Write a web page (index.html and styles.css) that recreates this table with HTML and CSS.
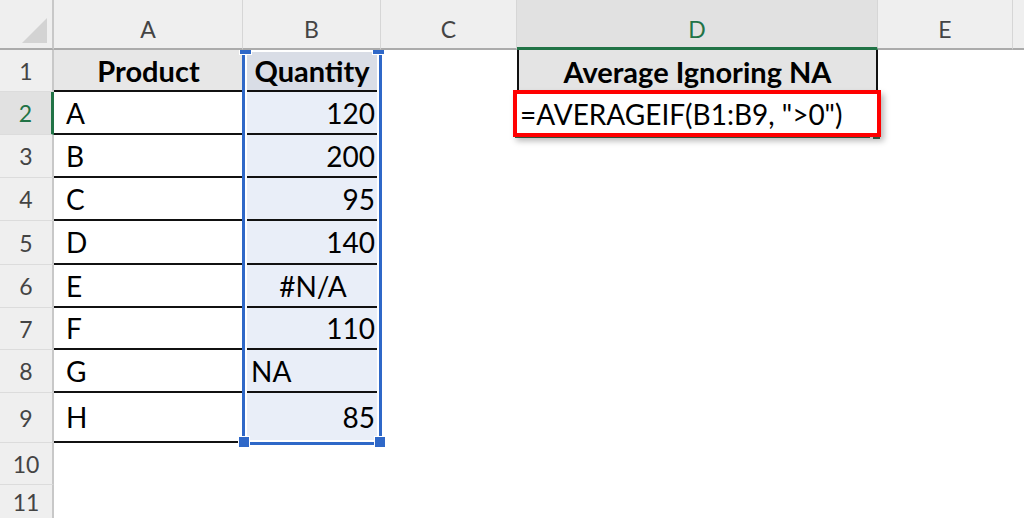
FILE: index.html
```html
<!DOCTYPE html>
<html lang="en">
<head>
<meta charset="utf-8">
<title>AVERAGEIF ignoring NA</title>
<link rel="stylesheet" href="styles.css">
</head>
<body>
<div class="sheet">
  <!-- column headers -->
  <div class="corner"><span class="tri"></span></div>
  <div class="ch">A</div>
  <div class="ch">B</div>
  <div class="ch">C</div>
  <div class="ch ch-active">D</div>
  <div class="ch">E</div>
  <div class="ch ch-last"></div>

  <!-- row 1 -->
  <div class="rh">1</div>
  <div class="c a hdr">Product</div>
  <div class="c b hdr bhdr">Quantity</div>
  <div class="c"></div>
  <div class="c d1 hdr">Average Ignoring NA</div>
  <div class="c"></div>
  <div class="c"></div>

  <!-- row 2 -->
  <div class="rh rh-active">2</div>
  <div class="c a">A</div>
  <div class="c b num">120</div>
  <div class="c"></div>
  <div class="c d2"><div class="editbox">=AVERAGEIF(B1:B9, "&gt;0")</div><span class="actline"></span><span class="fillh"></span></div>
  <div class="c"></div>
  <div class="c"></div>

  <!-- row 3 -->
  <div class="rh">3</div>
  <div class="c a">B</div>
  <div class="c b num">200</div>
  <div class="c"></div><div class="c"></div><div class="c"></div><div class="c"></div>

  <!-- row 4 -->
  <div class="rh">4</div>
  <div class="c a">C</div>
  <div class="c b num">95</div>
  <div class="c"></div><div class="c"></div><div class="c"></div><div class="c"></div>

  <!-- row 5 -->
  <div class="rh">5</div>
  <div class="c a">D</div>
  <div class="c b num">140</div>
  <div class="c"></div><div class="c"></div><div class="c"></div><div class="c"></div>

  <!-- row 6 -->
  <div class="rh">6</div>
  <div class="c a">E</div>
  <div class="c b err">#N/A</div>
  <div class="c"></div><div class="c"></div><div class="c"></div><div class="c"></div>

  <!-- row 7 -->
  <div class="rh">7</div>
  <div class="c a">F</div>
  <div class="c b num">110</div>
  <div class="c"></div><div class="c"></div><div class="c"></div><div class="c"></div>

  <!-- row 8 -->
  <div class="rh">8</div>
  <div class="c a">G</div>
  <div class="c b">NA</div>
  <div class="c"></div><div class="c"></div><div class="c"></div><div class="c"></div>

  <!-- row 9 -->
  <div class="rh">9</div>
  <div class="c a">H</div>
  <div class="c b num">85</div>
  <div class="c"></div><div class="c"></div><div class="c"></div><div class="c"></div>

  <!-- row 10 -->
  <div class="rh">10</div>
  <div class="c"></div><div class="c"></div><div class="c"></div><div class="c"></div><div class="c"></div><div class="c"></div>

  <!-- row 11 -->
  <div class="rh rh-last">11</div>
  <div class="c"></div><div class="c"></div><div class="c"></div><div class="c"></div><div class="c"></div><div class="c"></div>

  <!-- reference range highlight B1:B9 (overlay) -->
  <div class="sel">
    <span class="h h-tl"></span>
    <span class="h h-tr"></span>
    <span class="h h-bl"></span>
    <span class="h h-br"></span>
  </div>
</div>
</body>
</html>
```

FILE: styles.css
```css
* { box-sizing: border-box; }

html, body {
  margin: 0;
  padding: 0;
  background: #ffffff;
}

body {
  width: 1024px;
  height: 518px;
  overflow: hidden;
  font-family: "Lato", "Liberation Sans", sans-serif;
  color: #000;
}

.sheet {
  display: grid;
  grid-template-columns: 54px 189px 138px 136px 361px 135px 11px;
  grid-template-rows: 50px 42px 43px 43px 43px 44px 43px 42px 43px 50px 42px 33px;
  width: 1024px;
  height: 518px;
  position: relative;
}

/* ---------- headers ---------- */
.corner {
  background: #efefef;
  border-right: 2px solid #c8c8c8;
  border-bottom: 2px solid #ababab;
  position: relative;
}
.tri {
  position: absolute;
  left: 22px;
  top: 18px;
  width: 0;
  height: 0;
  border-style: solid;
  border-width: 0 0 25px 25px;
  border-color: transparent transparent #d3d3d3 transparent;
}

.ch {
  background: #efefef;
  border-bottom: 2px solid #ababab;
  border-right: 1px solid #d6d6d6;
  display: flex;
  align-items: center;
  justify-content: center;
  padding-top: 10px;
  font-size: 23px;
  color: #444;
}
.ch-active {
  background: #e1e1e1;
  border-bottom: 3px solid #217346;
  color: #217346;
}
.ch-last { border-right: 0; }

.rh {
  background: #efefef;
  border-right: 2px solid #c8c8c8;
  border-bottom: 1px solid #dcdcdc;
  display: flex;
  align-items: center;
  justify-content: center;
  font-size: 23px;
  color: #444;
}
.rh-active {
  background: #e1e1e1;
  color: #217346;
  border-right: 3px solid #217346;
}
.rh-last { border-bottom: 0; }

/* ---------- cells ---------- */
.c {
  display: flex;
  align-items: center;
  font-size: 28px;
  white-space: nowrap;
  min-width: 0;
}

.a {
  border-bottom: 2px solid #111;
  padding-left: 12px;
}

.b {
  background: #e9eef8;
  border-bottom: 2px solid #111;
  padding: 0 6px 0 8px;
}

.hdr {
  font-weight: 700;
  font-size: 29px;
  justify-content: center;
  background: #e7e7e7;
  padding: 0;
}
.bhdr { background: #d9dde6; }

.num { justify-content: flex-end; }
.err { justify-content: center; }

.d1 {
  border-left: 2px solid #111;
  border-right: 2px solid #111;
  background: #e4e4e4;
}

.d2 {
  position: relative;
  overflow: visible;
}

.editbox {
  position: absolute;
  left: -4px;
  right: -3px;
  top: -2px;
  bottom: -2px;
  border: 4px solid #ff0000;
  background: #fff;
  box-shadow: 3px 4px 6px rgba(0, 0, 0, 0.28);
  display: flex;
  align-items: center;
  padding-left: 3px;
  font-size: 28px;
  z-index: 3;
}

.actline {
  position: absolute;
  left: -2px;
  right: 8px;
  bottom: -3px;
  height: 3px;
  background: #3f6b4e;
  z-index: 2;
}
.fillh {
  position: absolute;
  right: -2px;
  bottom: -4px;
  width: 7px;
  height: 7px;
  background: #3f6b4e;
  z-index: 2;
}

/* ---------- reference highlight (overlay on grid area B1:B9) ---------- */
.sel {
  position: absolute;
  grid-column: 3 / 4;
  grid-row: 2 / 11;
  top: 0;
  left: -1px;
  right: -1px;
  bottom: -2px;
  border: 3px solid #2f68c8;
  border-top: 0;
  box-shadow: inset 0 0 0 2px #ffffff;
  pointer-events: none;
  z-index: 4;
}
.h {
  position: absolute;
  background: #2f68c8;
  border: 1px solid #ffffff;
}
.h-tl { left: -6px; top: 0; width: 13px; height: 5px; border-top: 0; }
.h-tr { right: -6px; top: 0; width: 13px; height: 5px; border-top: 0; }
.h-bl { left: -7px; bottom: -6px; width: 12px; height: 12px; }
.h-br { right: -7px; bottom: -6px; width: 12px; height: 12px; }
```
